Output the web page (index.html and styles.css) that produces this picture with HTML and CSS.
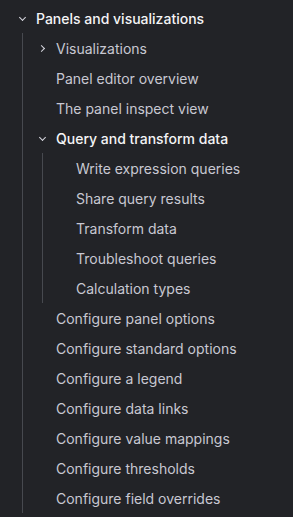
FILE: index.html
```html
<!DOCTYPE html>
<html lang="en">

<head>
    <meta charset="UTF-8">
    <meta name="viewport" content="width=device-width, initial-scale=1.0">
    <title>Docs sidebar</title>
    <link rel="stylesheet" href="styles.css">
</head>

<body>
    <nav class="sidebar">
        <ul class="tree">
            <li>
                <a class="row active" href="#"><span class="chev down"></span>Panels and visualizations</a>
                <ul class="tree nested">
                    <li><a class="row" href="#"><span class="chev right"></span>Visualizations</a></li>
                    <li><a class="row" href="#"><span class="chev"></span>Panel editor overview</a></li>
                    <li><a class="row" href="#"><span class="chev"></span>The panel inspect view</a></li>
                    <li>
                        <a class="row active" href="#"><span class="chev down"></span>Query and transform data</a>
                        <ul class="tree nested">
                            <li><a class="row" href="#"><span class="chev"></span>Write expression queries</a></li>
                            <li><a class="row" href="#"><span class="chev"></span>Share query results</a></li>
                            <li><a class="row" href="#"><span class="chev"></span>Transform data</a></li>
                            <li><a class="row" href="#"><span class="chev"></span>Troubleshoot queries</a></li>
                            <li><a class="row" href="#"><span class="chev"></span>Calculation types</a></li>
                        </ul>
                    </li>
                    <li><a class="row" href="#"><span class="chev"></span>Configure panel options</a></li>
                    <li><a class="row" href="#"><span class="chev"></span>Configure standard options</a></li>
                    <li><a class="row" href="#"><span class="chev"></span>Configure a legend</a></li>
                    <li><a class="row" href="#"><span class="chev"></span>Configure data links</a></li>
                    <li><a class="row" href="#"><span class="chev"></span>Configure value mappings</a></li>
                    <li><a class="row" href="#"><span class="chev"></span>Configure thresholds</a></li>
                    <li><a class="row" href="#"><span class="chev"></span>Configure field overrides</a></li>
                </ul>
            </li>
        </ul>
    </nav>
</body>

</html>
```

FILE: styles.css
```css
html,
body {
    margin: 0;
    height: 100%;
    background-color: #222327;
}

body {
    font-family: Inter, "Noto Sans", sans-serif;
    font-size: 14px;
}

.sidebar {
    padding: 3px 0 0 16px;
}

.tree {
    list-style: none;
    margin: 0;
    padding: 0;
}

.tree.nested {
    margin-left: 6px;
    padding-left: 13px;
    border-left: 1px solid #47494f;
}

.row {
    display: flex;
    align-items: center;
    height: 30px;
    color: #c8c8d2;
    text-decoration: none;
    white-space: nowrap;
}

.row.active {
    color: #f4f4f6;
    font-weight: 500;
}

.chev {
    width: 14px;
    height: 14px;
    margin-right: 6px;
    position: relative;
    flex-shrink: 0;
}

/* small chevrons drawn with borders */
.chev.down::before,
.chev.right::before {
    content: "";
    position: absolute;
    width: 4px;
    height: 4px;
    border-right: 1.6px solid #d8d8e0;
    border-bottom: 1.6px solid #d8d8e0;
}

.chev.down::before {
    left: 4px;
    top: 4px;
    transform: rotate(45deg);
}

.chev.right::before {
    left: 3px;
    top: 5px;
    transform: rotate(-45deg);
}
```
